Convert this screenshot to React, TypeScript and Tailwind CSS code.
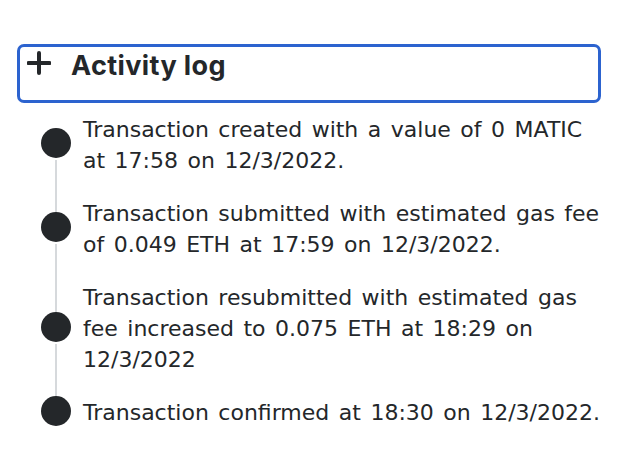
import React from 'react';

const events = [
  'Transaction created with a value of 0 MATIC at 17:58 on 12/3/2022.',
  'Transaction submitted with estimated gas fee of 0.049 ETH at 17:59 on 12/3/2022.',
  'Transaction resubmitted with estimated gas fee increased to 0.075 ETH at 18:29 on 12/3/2022',
  'Transaction confirmed at 18:30 on 12/3/2022.',
];

function PlusIcon() {
  return (
    <svg width="24" height="24" viewBox="0 0 24 24" className="shrink-0">
      <path d="M12 2v20M1.5 12h21" stroke="#24272a" strokeWidth="4" strokeLinecap="round" />
    </svg>
  );
}

export default function App() {
  return (
    <div className="w-[630px] h-[460px] bg-white pt-[44px] pl-[17px] text-[#24272a] font-['DejaVu_Sans',sans-serif]">
      <div className="w-[584px] h-[59px] border-[3px] border-[#2c63cf] rounded-[7px] flex items-start pt-[4px] pl-[7px] gap-[20px]">
        <PlusIcon />
        <span className="text-[27px] font-bold leading-[30px] tracking-[0.4px] font-['Inter',sans-serif]">Activity log</span>
      </div>

      <ul className="flex flex-col pl-[24px]">
        {events.map((text, i) => (
          <li key={i} className="flex items-stretch gap-[12px]">
            <div className="w-[30px] flex flex-col items-center shrink-0">
              <div className={i === 0 ? 'flex-1 w-[2px]' : 'flex-1 w-[2px] bg-[#d6d9dc]'} />
              <div className="w-[30px] h-[30px] rounded-full bg-[#24272a] shrink-0 -translate-y-[2px]" />
              <div className={i === events.length - 1 ? 'flex-1 w-[2px]' : 'flex-1 w-[2px] bg-[#d6d9dc]'} />
            </div>
            <p className="py-[11px] w-[520px] text-[22px] leading-[31px] [word-spacing:2.5px]">{text}</p>
          </li>
        ))}
      </ul>
    </div>
  );
}
